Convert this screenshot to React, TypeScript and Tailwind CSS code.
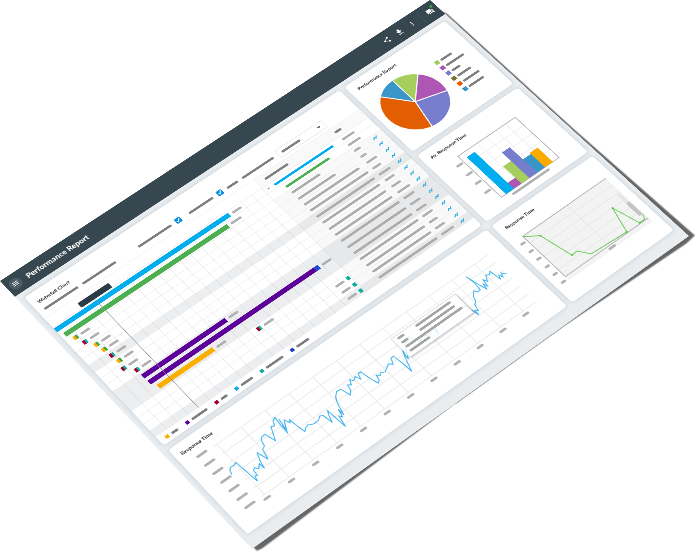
import { useEffect, useState } from "react";
import type { ReactNode } from "react";
import { MdDownload, MdMoreVert, MdShare, MdForum, MdMenu } from "react-icons/md";

const BOARD_WIDTH = 1000;
const BOARD_HEIGHT = 710;

// where the board's corners land on a 700 unit wide scene
const CORNERS = {
  topLeft: [0, 281],
  topRight: [430, 0],
  bottomRight: [689, 236],
  bottomLeft: [252, 549],
};

function boardMatrix(scale: number) {
  const [x0, y0] = CORNERS.topLeft.map((n) => n * scale);
  const [x1, y1] = CORNERS.topRight.map((n) => n * scale);
  const [x2, y2] = CORNERS.bottomRight.map((n) => n * scale);
  const [x3, y3] = CORNERS.bottomLeft.map((n) => n * scale);
  const dx1 = x1 - x2;
  const dx2 = x3 - x2;
  const dx3 = x0 - x1 + x2 - x3;
  const dy1 = y1 - y2;
  const dy2 = y3 - y2;
  const dy3 = y0 - y1 + y2 - y3;
  const det = dx1 * dy2 - dx2 * dy1;
  const g = (dx3 * dy2 - dx2 * dy3) / det;
  const h = (dx1 * dy3 - dx3 * dy1) / det;
  const W = BOARD_WIDTH;
  const H = BOARD_HEIGHT;
  const m = [
    (x1 - x0 + g * x1) / W, (y1 - y0 + g * y1) / W, 0, g / W,
    (x3 - x0 + h * x3) / H, (y3 - y0 + h * y3) / H, 0, h / H,
    0, 0, 1, 0,
    x0, y0, 0, 1,
  ];
  return `matrix3d(${m.map((n) => n.toFixed(8)).join(",")})`;
}

function Card({ title, className = "", children }: { title: string; className?: string; children: ReactNode }) {
  return (
    <section className={`relative flex flex-col overflow-hidden rounded-md bg-white shadow-[0_0_8px_rgba(60,80,100,0.22)] ${className}`}>
      <h2 className="text-[10px] leading-3 font-black text-[#444]">{title}</h2>
      {children}
    </section>
  );
}

function Line({ width, className = "bg-[#808080]" }: { width: number; className?: string }) {
  return <span className={`block h-[5px] shrink-0 rounded-full ${className}`} style={{ width }} />;
}

const legend = [
  { color: "bg-[#fbb000]", width: 14 },
  { color: "bg-[#5c0099]", width: 34 },
  { color: "bg-[#a5002d]", width: 14 },
  { color: "bg-[#14a9ea]", width: 26 },
  { color: "bg-[#12aea0]", width: 38 },
  { color: "bg-[#1f3fc4]", width: 28 },
];

type Row = { start: number; length: number; kind: string; label?: number; text: number; value: number; before?: boolean };

const rows: Row[] = [
  { start: 0, length: 389, kind: "blue", label: 21, text: 138, value: 29 },
  { start: 7, length: 365, kind: "green", label: 24, text: 102, value: 29 },
  { start: 14, length: 9, kind: "amber", label: 20, text: 66, value: 15 },
  { start: 21, length: 9, kind: "red", label: 20, text: 87, value: 14 },
  { start: 33, length: 9, kind: "amber", label: 20, text: 129, value: 24 },
  { start: 37, length: 9, kind: "amber", label: 20, text: 136, value: 20 },
  { start: 40, length: 9, kind: "red", label: 20, text: 136, value: 27 },
  { start: 43, length: 9, kind: "amber", label: 20, text: 134, value: 22 },
  { start: 39, length: 9, kind: "red", label: 20, text: 133, value: 22 },
  { start: 55, length: 9, kind: "red", label: 20, text: 133, value: 29 },
  { start: 58, length: 185, kind: "purple", label: 21, text: 136, value: 25 },
  { start: 59, length: 371, kind: "purple", label: 21, text: 136, value: 24 },
  { start: 66, length: 122, kind: "yellow", label: 21, text: 136, value: 24 },
  { start: 271, length: 9, kind: "red", label: 22, text: 136, value: 24 },
  { start: 460, length: 7, kind: "teal", label: 20, text: 136, value: 20, before: true },
  { start: 460, length: 7, kind: "teal", label: 20, text: 136, value: 22, before: true },
  { start: 460, length: 7, kind: "teal", label: 20, text: 136, value: 29, before: true },
];

const shaded = [6, 10, 11, 12, 16];

const barColors: Record<string, string> = {
  blue: "h-[10px] bg-[#00aeef]",
  green: "h-[10px] bg-[#4caf50]",
  purple: "h-[10px] bg-[#5c0099]",
  yellow: "h-[10px] bg-[#fbb000]",
  amber: "h-[9px] bg-linear-to-r from-[#fbb000] from-60% to-[#36a844] to-60%",
  red: "h-[9px] bg-linear-to-r from-[#a5002d] from-60% to-[#12aea0] to-60%",
  teal: "h-2 bg-[#12aea0]",
};

function Spark() {
  return (
    <svg viewBox="0 0 12 12" className="size-3" fill="none" stroke="#29abe2" strokeWidth="2">
      <path d="M1 9 L5 5 L7 8 L11 3" />
    </svg>
  );
}

function Waterfall() {
  return (
    <Card title="Waterfall Chart" className="row-span-2 pt-[17px] [&>h2]:px-3">
      <div className="mt-[3px] flex h-5 items-center gap-2.5 px-3">
        <Line width={74} />
        <Line width={74} />
        <label className="ml-10 flex items-center gap-2.5">
          <Line width={75} />
          <input type="checkbox" defaultChecked aria-label="Show parents" className="size-3 accent-[#0a8fe0]" />
        </label>
        <label className="ml-2 flex items-center gap-2.5">
          <Line width={55} />
          <input type="checkbox" defaultChecked aria-label="Show children" className="size-3 accent-[#0a8fe0]" />
        </label>
        <Line width={25} />
        <Line width={73} />
        <div className="relative flex h-5 w-[110px] items-center justify-between rounded border border-[#dcdcdc] pr-2 pl-2">
          <select aria-label="Sort order" className="absolute inset-0 appearance-none opacity-0">
            <option />
          </select>
          <Line width={43} />
          <span className="border-x-4 border-t-4 border-x-transparent border-t-[#555]" />
        </div>
      </div>

      <div className="mt-1.5 flex h-6 border-t border-[#efefef]">
        <div className="w-[470px]" />
        <div className="grid flex-1 grid-cols-[164px_1fr] items-center bg-[#f9f9f9] pl-[17px]">
          <Line width={54} />
          <Line width={15} />
        </div>
      </div>

      <div className="relative flex flex-1 flex-col">
        <div className="absolute inset-y-0 left-0 z-10 grid w-[470px] grid-cols-20">
          {Array.from({ length: 20 }, (_, i) => (
            <span key={i} className="border-r border-[#8090a0]/20" />
          ))}
        </div>
        {rows.map((row, i) => (
          <div key={i} className={`flex flex-1 border-t border-[#ececec] ${shaded.includes(i) ? "bg-[#eceef0]" : ""}`}>
            <div className="relative z-20 flex w-[470px] items-center gap-1.5">
              {row.before ? (
                <>
                  <span className="flex shrink-0 justify-end" style={{ width: row.start - 6 }}>
                    <Line width={row.label ?? 20} className="bg-[#b0b0b0]" />
                  </span>
                  <span className={`block shrink-0 ${barColors[row.kind]}`} style={{ width: row.length }} />
                </>
              ) : (
                <>
                  <span className={`block shrink-0 ${barColors[row.kind]}`} style={{ marginLeft: row.start, width: row.length }} />
                  {i === 11 && <span className="-ml-1.5 block size-[10px] bg-[#2149d8]" />}
                  <Line width={row.label ?? 20} className="bg-[#b0b0b0]" />
                </>
              )}
            </div>
            <div className={`grid flex-1 grid-cols-[181px_43px_1fr] items-center ${shaded.includes(i) ? "bg-[#e6e8ea]" : i < 2 ? "bg-white" : "bg-[#f9f9f9]"}`}>
              <div className={`flex items-center ${i === 0 ? "gap-2.5 pl-1.5" : "pl-[35px]"}`}>
                {i === 0 && <span className="border-x-3 border-t-3 border-x-transparent border-t-[#777]" />}
                <Line width={row.text} className={i === 0 ? "bg-[#00aeef]" : i === 1 ? "bg-[#4caf50]" : "bg-[#acacac]"} />
              </div>
              <Line width={row.value} className="bg-[#b0b0b0]" />
              {i > 1 && <Spark />}
            </div>
          </div>
        ))}
        {/* hover marker */}
        <span className="absolute inset-y-0 left-[92px] z-30 w-px bg-[#999]" />
        <span className="absolute -top-3 left-16 z-30 h-3 w-[68px] rounded-xs bg-[#2b3c47]" />
      </div>

      <ul className="flex h-[22px] items-center gap-[17px] px-3">
        {legend.map((item) => (
          <li key={item.color} className="flex items-center gap-1.5">
            <span className={`size-[7px] ${item.color}`} />
            <Line width={item.width} />
          </li>
        ))}
      </ul>
    </Card>
  );
}

const slices = [
  { from: 0, to: 45, color: "#a6ce5c" },
  { from: 45, to: 106, color: "#ad56b3" },
  { from: 106, to: 192, color: "#767dcd" },
  { from: 192, to: 320, color: "#e25e00" },
  { from: 320, to: 360, color: "#3a95c8" },
];

const pieLegend = [
  { color: "bg-[#a6ce5c]", width: 27 },
  { color: "bg-[#ad56b3]", width: 43 },
  { color: "bg-[#767dcd]", width: 20 },
  { color: "bg-[#76762f]", width: 32 },
  { color: "bg-[#e25e00]", width: 39 },
  { color: "bg-[#3a95c8]", width: 36 },
];

function slicePath(from: number, to: number) {
  const point = (deg: number) => {
    const rad = ((deg - 90) * Math.PI) / 180;
    return `${(65 * Math.cos(rad)).toFixed(2)} ${(65 * Math.sin(rad)).toFixed(2)}`;
  };
  return `M0 0 L${point(from)} A65 65 0 0 1 ${point(to)} Z`;
}

function PieCard() {
  return (
    <Card title="Performance Report" className="pt-3.5 [&>h2]:px-4">
      <div className="flex flex-1 items-center pl-3">
        <svg viewBox="-66 -66 132 132" className="size-[132px]">
          {slices.map((s) => (
            <path key={s.color} d={slicePath(s.from, s.to)} fill={s.color} stroke="#fff" strokeWidth="2" />
          ))}
        </svg>
        <ul className="mb-2 ml-5 flex flex-col gap-[7px]">
          {pieLegend.map((item) => (
            <li key={item.color} className="flex h-[9px] items-center gap-1">
              <span className={`size-[9px] ${item.color}`} />
              <Line width={item.width} />
            </li>
          ))}
        </ul>
      </div>
    </Card>
  );
}

const bars = [
  { x: 811, h: 108, color: "#00aeef" },
  { x: 830, h: 17, color: "#ad56b3" },
  { x: 848, h: 50, color: "#a6ce5c" },
  { x: 867, h: 75, color: "#767dcd" },
  { x: 886, h: 39, color: "#3a95c8" },
  { x: 905, h: 42, color: "#fbab00" },
];

function BarCard() {
  return (
    <Card title="Av. Response Time" className="pt-3.5 [&>h2]:px-4">
      <svg viewBox="744 288 244 167" className="min-h-0 flex-1">
        <g stroke="#e6e6e6" strokeWidth="1">
          {[823, 846, 869, 892, 915].map((x) => (
            <path key={x} d={`M${x} 311 V431`} />
          ))}
          {[335, 359, 383, 407].map((y) => (
            <path key={y} d={`M800 ${y} H939`} />
          ))}
        </g>
        <rect x="800" y="311" width="139" height="120" fill="none" stroke="#a8a8a8" strokeWidth="1.5" />
        {bars.map((b) => (
          <rect key={b.x} x={b.x} y={431 - b.h} width="19" height={b.h} fill={b.color} />
        ))}
        <g stroke="#b0b0b0" strokeWidth="5" strokeLinecap="round">
          {[328, 354, 379, 405].map((y) => (
            <path key={y} d={`M785 ${y} H795`} />
          ))}
          <path d="M822 439 H906" />
        </g>
      </svg>
    </Card>
  );
}

function LineCard() {
  return (
    <Card title="Response Time" className="pt-3.5 [&>h2]:px-4">
      <svg viewBox="744 493 244 190" className="min-h-0 flex-1" fill="none">
        <rect x="772" y="520" width="200" height="124" fill="#f3f3f3" />
        <g stroke="#e0e0e0" strokeWidth="1">
          {[539, 558, 577, 596, 615].map((y) => (
            <path key={y} d={`M772 ${y} H970`} />
          ))}
          <path d="M878 520 V633" />
        </g>
        <path d="M972 520 H772 V634 H972" stroke="#a8a8a8" strokeWidth="1.5" />
        <path d="M966 560 V585" stroke="#e6e6e6" strokeWidth="8" />
        <path d="M966 585 V621" stroke="#c4c4c4" strokeWidth="8" />
        <path
          d="M772 521 L797 539 L812 607 L825 606 L840 627 L921 632 L937 577 L952 632 L965 632 L969 622"
          stroke="#66cc55"
          strokeWidth="1.8"
        />
        <g fill="#4dbb3a">
          <circle cx="937" cy="577" r="1.8" />
          <circle cx="921" cy="632" r="1.8" />
          <circle cx="952" cy="632" r="1.8" />
          <circle cx="812" cy="607" r="1.8" />
          <circle cx="797" cy="539" r="1.8" />
        </g>
        <g stroke="#b0b0b0" strokeWidth="5" strokeLinecap="round">
          {[532, 554, 575, 597, 618, 640].map((y) => (
            <path key={y} d={`M759 ${y} H765`} />
          ))}
          <path d="M873 640 H884" />
        </g>
      </svg>
    </Card>
  );
}

const responsePath =
  "M65 575 L67 567 L72 562 L79 563 L85 560 L90 613 L93 602 L97 604 L98 592 L103 589 L107 595 L114 588 L115 601 L119 583 L125 569 L128 579 L131 591 L136 570 L143 566 L146 553 L151 549 L158 548 L161 558 L164 570 L170 556 L176 543 L182 546 L186 536 L193 533 L191 552 L190 572 L196 540 L192 566 L199 552 L202 547 L206 558 L209 553 L210 560 L214 588 L220 583 L227 581 L236 586 L247 585 L254 580 L259 583 L262 604 L266 590 L271 580 L274 625 L279 601 L283 606 L287 590 L287 605 L292 585 L296 574 L300 567 L308 560 L316 561 L319 571 L321 581 L328 574 L331 562 L336 566 L341 556 L345 562 L352 557 L356 567 L360 556 L366 556 L369 575 L374 593 L379 590 L382 578 L387 583 L391 579 L398 583 L405 579 L413 574 L419 580 L424 568 L430 567 L433 590 L434 612 L442 588 L450 568 L447 580 L446 589 L456 570 L465 560 L476 553 L481 564 L485 574 L496 569 L508 574 L515 566 L522 566 L520 584 L527 563 L540 568 L560 561 L580 570 L594 567 L598 582 L601 598 L602 585 L606 590 L610 576 L616 572 L619 562 L628 553 L632 560 L638 558 L640 540 L637 521 L642 544 L648 566 L650 552 L653 561 L656 546 L660 553 L666 541 L672 545 L677 540 L679 553 L680 565 L684 556 L687 564 L690 555 L696 563";

function ResponseCard() {
  return (
    <Card title="Response Time" className="pt-3.5 [&>h2]:px-3">
      <svg viewBox="12 493 720 190" className="min-h-0 flex-1" fill="none">
        <g stroke="#e9e9e9" strokeWidth="1.5">
          {[511, 532, 554, 576, 598, 620, 641].map((y) => (
            <path key={y} d={`M76 ${y} H698`} />
          ))}
          {Array.from({ length: 12 }, (_, i) => (
            <path key={i} d={`M${83 + i * 53} 511 V641`} />
          ))}
        </g>
        <path d={responsePath} stroke="#3fb4ee" strokeWidth="1.8" />
        <g stroke="#b0b0b0" strokeWidth="5" strokeLinecap="round">
          {[510, 532, 554, 576, 598, 620, 641].map((y) => (
            <path key={y} d={`M42 ${y} H60`} />
          ))}
          {Array.from({ length: 12 }, (_, i) => (
            <path key={i} d={`M${77 + i * 53} 649 h10`} />
          ))}
        </g>
      </svg>
      <div className="absolute top-[70px] left-[438px] h-[51px] w-[148px] border border-[#d0d0d0] bg-white/80 px-2 pt-1 shadow-[1px_2px_4px_rgba(0,0,0,0.25)]">
        <div className="flex flex-col gap-1.5">
          <div className="flex gap-[26px]">
            <Line width={15} className="bg-[#a5a5a5]" />
            <Line width={81} className="bg-[#a5a5a5]" />
          </div>
          <div className="flex gap-[26px]">
            <Line width={15} className="bg-[#a5a5a5]" />
            <Line width={81} className="bg-[#a5a5a5]" />
          </div>
          <Line width={130} className="bg-[#a5a5a5]" />
          <Line width={46} className="bg-[#a5a5a5]" />
        </div>
      </div>
    </Card>
  );
}

function TopBar() {
  return (
    <header className="flex h-11 items-center bg-[#37474f] pr-2.5 pl-1.5 text-white">
      <button type="button" aria-label="Menu" className="flex size-6 items-center justify-center rounded-full bg-[#4a5d67]">
        <MdMenu className="size-4" />
      </button>
      <h1 className="ml-3 text-[15px] font-black">Performance Report</h1>
      <div className="ml-auto flex items-center gap-3.5">
        <button type="button" aria-label="Share"><MdShare className="size-4" /></button>
        <button type="button" aria-label="Download"><MdDownload className="size-[18px]" /></button>
        <button type="button" aria-label="More"><MdMoreVert className="size-4" /></button>
        <span className="h-7 w-px bg-[#4a5d67]" />
        <button type="button" aria-label="Messages" className="relative">
          <MdForum className="size-4" />
          <span className="absolute -top-1 -right-1 size-1.5 rounded-full bg-[#43a047]" />
        </button>
      </div>
    </header>
  );
}

export default function App() {
  const [width, setWidth] = useState(() => window.innerWidth);

  useEffect(() => {
    const onResize = () => setWidth(window.innerWidth);
    window.addEventListener("resize", onResize);
    return () => window.removeEventListener("resize", onResize);
  }, []);

  return (
    <main className="h-screen overflow-hidden bg-white font-['Lato',sans-serif]">
      <div className="relative h-[710px] w-[1000px] origin-top-left" style={{ transform: boardMatrix(width / 700) }}>
        {/* lifted corners */}
        <svg viewBox="-20 -20 1040 750" className="absolute -top-5 -left-5 h-[750px] w-[1040px]">
          <g fill="#666" className="blur-[1px]">
            <path d="M1000 36 L1003 46 L1003 400 L1009 716 L990 708 Z" />
            <path d="M4 708 L4 718 L14 720 L450 710 L450 708 Z" />
            <path d="M450 708 L450 711 L700 711 L985 719 L1008 716 L990 700 Z" />
          </g>
        </svg>
        <div className="relative flex h-full flex-col bg-[#e9edf0]">
          <TopBar />
          <div className="grid flex-1 grid-cols-[1fr_244px] grid-rows-[194px_193px_1fr] gap-3 px-3 pt-3 pb-[27px]">
            <Waterfall />
            <PieCard />
            <BarCard />
            <ResponseCard />
            <LineCard />
          </div>
        </div>
      </div>
    </main>
  );
}
